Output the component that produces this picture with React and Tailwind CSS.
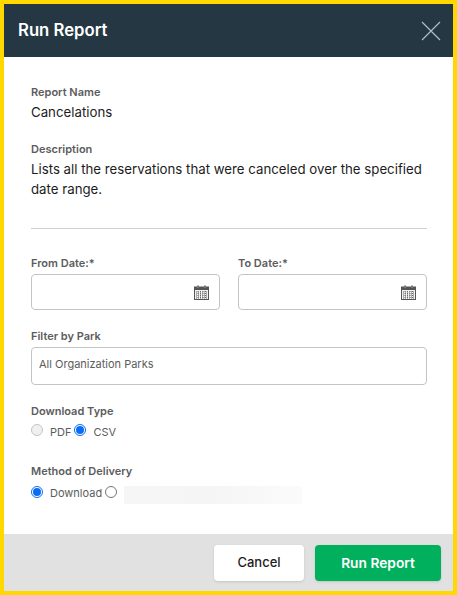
import React from 'react';

function CalendarIcon() {
  return (
    <svg width="15" height="15" viewBox="0 0 15 15" className="shrink-0">
      <rect x="0.5" y="2" width="14" height="12.5" fill="#f2f2f2" stroke="#555" />
      <rect x="0.5" y="2" width="14" height="3" fill="#555" />
      <rect x="3" y="0.5" width="2" height="2.5" fill="#777" />
      <rect x="10" y="0.5" width="2" height="2.5" fill="#777" />
      <path d="M2 7h11M2 9h11M2 11h11M2 13h11M4 6v8M6.5 6v8M9 6v8M11.5 6v8" stroke="#666" strokeWidth="1" strokeDasharray="1 1" />
    </svg>
  );
}

function Radio({ checked, disabled, lift = 'mt-[-2px]' }) {
  if (checked) {
    return (
      <span className={`${lift} flex h-[12px] w-[12px] shrink-0 items-center justify-center rounded-full border border-[#0a6cf5] bg-white`}>
        <span className="h-[8px] w-[8px] rounded-full bg-[#0a6cf5]" />
      </span>
    );
  }
  return (
    <span className={`${lift} h-[12px] w-[12px] shrink-0 rounded-full border ${disabled ? 'border-[#c4c4c4] bg-[#f0f0f0]' : 'border-[#767676] bg-white'}`} />
  );
}

function DateField({ label }) {
  return (
    <div className="flex-1">
      <label className="block text-[11px] font-semibold leading-[14px] text-[#5c5c5c]">{label}</label>
      <div className="mt-[4px] flex h-9 items-center justify-end rounded border border-[#c4c4c4] pr-[10px]">
        <CalendarIcon />
      </div>
    </div>
  );
}

export default function App() {
  return (
    <div className="flex h-[595px] w-[457px] flex-col border-4 border-[#ffd800] bg-white font-['Inter',sans-serif]">
      {/* Header */}
      <div className="flex h-[53px] shrink-0 items-center justify-between bg-[#243743] pl-[14px] pr-[12px]">
        <h1 className="text-[16.7px] font-semibold text-white">Run Report</h1>
        <svg width="20" height="20" viewBox="0 0 20 20" stroke="#b4bcc1" strokeWidth="1.2">
          <path d="M1 1l18 18M19 1L1 19" />
        </svg>
      </div>

      {/* Body */}
      <div className="flex-1 pl-[27px] pr-[26px] pt-[28px]">
        <div className="text-[11px] font-semibold leading-[14px] text-[#5c5c5c]">Report Name</div>
        <div className="mt-[4px] text-[13.25px] leading-[18px] text-[#1c1c1c]">Cancelations</div>

        <div className="mt-[21px] text-[11px] font-semibold leading-[14px] text-[#5c5c5c]">Description</div>
        <p className="mt-[3px] text-[13.25px] leading-[20px] text-[#1c1c1c]">
          Lists all the reservations that were canceled over the specified date range.
        </p>

        <div className="mt-[29px] border-t border-[#d0d0d0]" />

        <div className="mt-[27px] flex gap-[18px]">
          <DateField label="From Date:*" />
          <DateField label="To Date:*" />
        </div>

        <label className="mt-[19px] block text-[11px] font-semibold leading-[14px] text-[#5c5c5c]">Filter by Park</label>
        <div className="mt-[4px] flex h-[38px] items-center rounded-sm border border-[#c4c4c4] px-[7px] pb-[3px] text-[11px] text-[#5c5c5c]">
          All Organization Parks
        </div>

        <div className="mt-[19px] text-[11px] font-semibold leading-[14px] text-[#5c5c5c]">Download Type</div>
        <div className="mt-[6px] flex items-center text-[11px] leading-[16px] text-[#5c5c5c]">
          <Radio disabled lift="mt-[-4px]" />
          <span className="ml-[7px] mr-[3px]">PDF</span>
          <Radio checked lift="mt-[-4px]" />
          <span className="ml-[7px]">CSV</span>
        </div>

        <div className="mt-[24px] text-[11px] font-semibold leading-[14px] text-[#5c5c5c]">Method of Delivery</div>
        <div className="mt-[4px] flex items-center text-[11px] leading-[16px] text-[#5c5c5c]">
          <Radio checked />
          <span className="ml-[7px] mr-[3px]">Download</span>
          <Radio />
          <span className="mb-[-1px] ml-[7px] mt-[4px] h-[18px] w-[178px] bg-gradient-to-r from-[#f6f6f6] via-[#f5f5f5] to-[#fbfbfb]" />
        </div>
      </div>

      {/* Footer */}
      <div className="flex h-[57px] shrink-0 items-start justify-end gap-[11px] bg-[#e1e1e1] pr-[12px] pt-[11px]">
        <button className="flex h-9 w-[90px] items-center justify-center rounded bg-white text-[13px] font-medium text-[#1c1c1c] shadow-sm">
          Cancel
        </button>
        <button className="flex h-9 w-[126px] items-center justify-center rounded bg-[#00b05d] text-[13.75px] font-semibold text-white shadow-sm">
          Run Report
        </button>
      </div>
    </div>
  );
}
